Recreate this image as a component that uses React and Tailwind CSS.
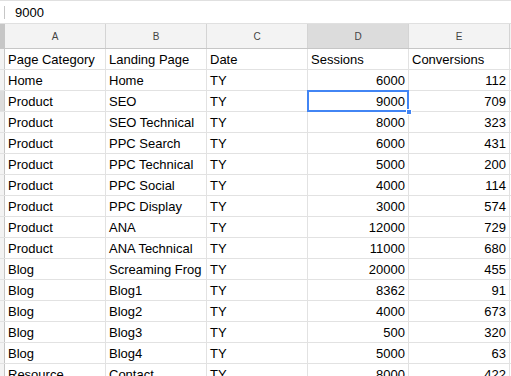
const rows = [
  ['Page Category', 'Landing Page', 'Date', 'Sessions', 'Conversions'],
  ['Home', 'Home', 'TY', 6000, 112],
  ['Product', 'SEO', 'TY', 9000, 709],
  ['Product', 'SEO Technical', 'TY', 8000, 323],
  ['Product', 'PPC Search', 'TY', 6000, 431],
  ['Product', 'PPC Technical', 'TY', 5000, 200],
  ['Product', 'PPC Social', 'TY', 4000, 114],
  ['Product', 'PPC Display', 'TY', 3000, 574],
  ['Product', 'ANA', 'TY', 12000, 729],
  ['Product', 'ANA Technical', 'TY', 11000, 680],
  ['Blog', 'Screaming Frog', 'TY', 20000, 455],
  ['Blog', 'Blog1', 'TY', 8362, 91],
  ['Blog', 'Blog2', 'TY', 4000, 673],
  ['Blog', 'Blog3', 'TY', 500, 320],
  ['Blog', 'Blog4', 'TY', 5000, 63],
  ['Resource', 'Contact', 'TY', 8000, 422],
]

const cols = ['A', 'B', 'C', 'D', 'E']

export default function App() {
  return (
    <div className="w-[511px] h-[376px] overflow-hidden bg-white text-black"
      style={{ fontFamily: '"Liberation Sans", Arial, sans-serif' }}>

      {/* formula bar */}
      <div className="h-[24px] flex items-center border-t border-b border-[#e0e0e0]">
        <div className="w-px h-[13px] bg-[#c6c6c6] ml-[4px]" />
        <span className="ml-[10px] text-[13px] pt-[1px]">9000</span>
      </div>

      {/* column headers */}
      <div className="flex h-[25px] bg-[#f3f3f3] border-b border-[#c6c6c6]">
        <div className="w-[5px] shrink-0 bg-[#c6c6c6] border-r border-[#c6c6c6]" />
        {cols.map(c => (
          <div key={c}
            className={`w-[101px] shrink-0 flex items-center justify-center border-r border-[#d4d4d4] text-[10px] text-[#444] ${c === 'D' ? 'bg-[#dcdcdc]' : ''}`}>
            {c}
          </div>
        ))}
      </div>

      {/* grid */}
      {rows.map((r, i) => (
        <div key={i} className="flex h-[21px] border-b border-[#e2e2e2]">
          <div className={`w-[5px] shrink-0 border-r border-[#c6c6c6] ${i === 2 ? 'bg-[#dcdcdc]' : 'bg-[#f3f3f3]'}`} />
          {r.map((v, j) => {
            const num = typeof v === 'number'
            const selected = i === 2 && j === 3
            return (
              <div key={j}
                className={`relative w-[101px] shrink-0 flex items-center border-r border-[#e2e2e2] px-[3px] pt-[1px] text-[13px] whitespace-nowrap ${num ? 'justify-end' : ''}`}>
                {v}
                {selected && (
                  <>
                    <div className="absolute left-[-1px] top-[-1px] right-[-1px] bottom-[-1px] border-2 border-[#4285f4]" />
                    <div className="absolute right-[-4px] bottom-[-4px] w-[6px] h-[6px] bg-[#4285f4] border border-white z-10" />
                  </>
                )}
              </div>
            )
          })}
        </div>
      ))}
    </div>
  )
}
